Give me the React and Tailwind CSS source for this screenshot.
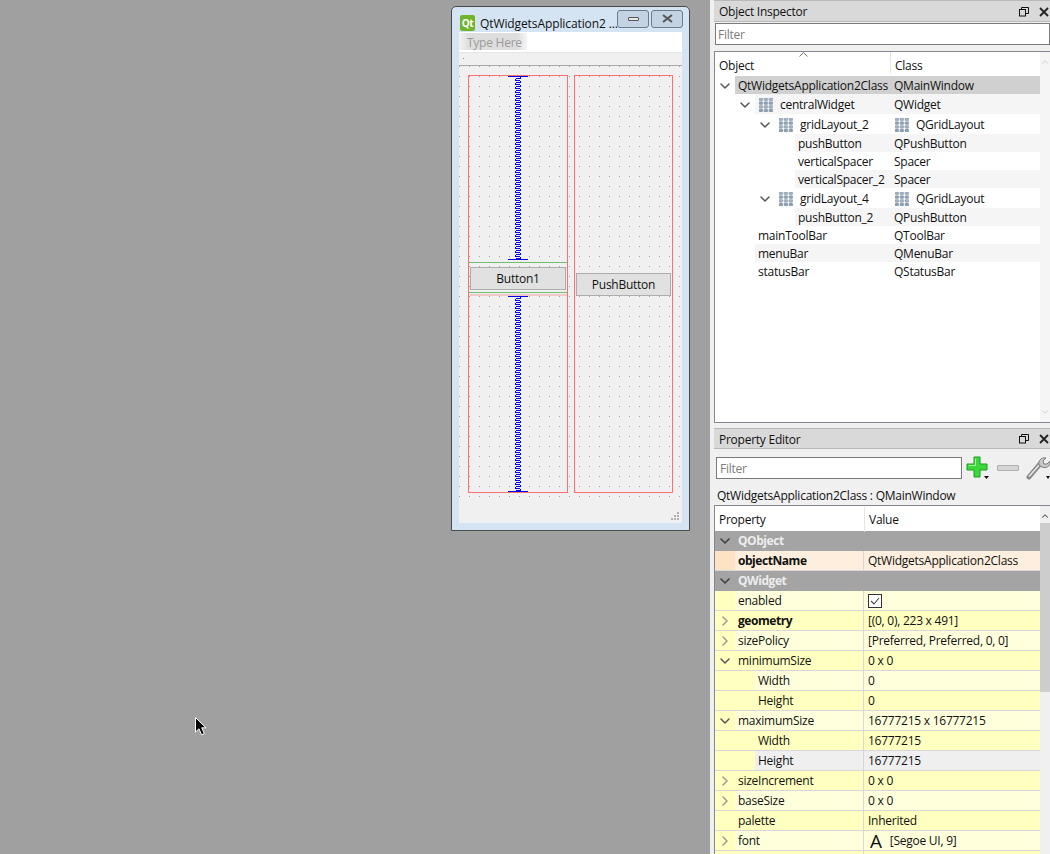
import { ChevronDown, ChevronRight, ChevronUp } from 'lucide-react';

const treeRows = [
  { name: 'QtWidgetsApplication2Class', cls: 'QMainWindow', level: 0, open: true, h: 'h-[18px]', bg: 'bg-[#d0d0d0]' },
  { name: 'centralWidget', cls: 'QWidget', level: 1, open: true, icon: true, h: 'h-5', bg: 'bg-[#f5f5f5]' },
  { name: 'gridLayout_2', cls: 'QGridLayout', level: 2, open: true, icon: true, clsIcon: true, h: 'h-5', bg: 'bg-white' },
  { name: 'pushButton', cls: 'QPushButton', level: 3, h: 'h-[18px]', bg: 'bg-[#f5f5f5]' },
  { name: 'verticalSpacer', cls: 'Spacer', level: 3, h: 'h-[18px]', bg: 'bg-white' },
  { name: 'verticalSpacer_2', cls: 'Spacer', level: 3, h: 'h-[18px]', bg: 'bg-[#f5f5f5]' },
  { name: 'gridLayout_4', cls: 'QGridLayout', level: 2, open: true, icon: true, clsIcon: true, h: 'h-5', bg: 'bg-white' },
  { name: 'pushButton_2', cls: 'QPushButton', level: 3, h: 'h-[18px]', bg: 'bg-[#f5f5f5]' },
  { name: 'mainToolBar', cls: 'QToolBar', level: 1, h: 'h-[18px]', bg: 'bg-white' },
  { name: 'menuBar', cls: 'QMenuBar', level: 1, h: 'h-[18px]', bg: 'bg-[#f5f5f5]' },
  { name: 'statusBar', cls: 'QStatusBar', level: 1, h: 'h-[18px]', bg: 'bg-white' },
];

const propRows = [
  { section: 'QObject' },
  { name: 'objectName', value: 'QtWidgetsApplication2Class', bold: true, tone: 'name' },
  { section: 'QWidget' },
  { name: 'enabled', check: true, tone: 'light' },
  { name: 'geometry', value: '[(0, 0), 223 x 491]', bold: true, arrow: 'right', tone: 'dark' },
  { name: 'sizePolicy', value: '[Preferred, Preferred, 0, 0]', arrow: 'right', tone: 'light' },
  { name: 'minimumSize', value: '0 x 0', arrow: 'down', tone: 'dark' },
  { name: 'Width', value: '0', sub: true, tone: 'light' },
  { name: 'Height', value: '0', sub: true, tone: 'dark' },
  { name: 'maximumSize', value: '16777215 x 16777215', arrow: 'down', tone: 'light' },
  { name: 'Width', value: '16777215', sub: true, tone: 'dark' },
  { name: 'Height', value: '16777215', sub: true, tone: 'selected' },
  { name: 'sizeIncrement', value: '0 x 0', arrow: 'right', tone: 'dark' },
  { name: 'baseSize', value: '0 x 0', arrow: 'right', tone: 'light' },
  { name: 'palette', value: 'Inherited', tone: 'dark' },
  { name: 'font', value: '[Segoe UI, 9]', fontIcon: true, arrow: 'right', tone: 'light' },
  { name: '', value: '', tone: 'dark' },
];

const toneBg = {
  name: 'bg-[#feeedd]',
  light: 'bg-[#ffffdc]',
  dark: 'bg-[#ffffbf]',
  selected: 'bg-[#efefef]',
};

function GridIcon({ className = '' }) {
  const cells = [];
  for (let y = 0; y < 4; y++) {
    for (let x = 0; x < 3; x++) {
      cells.push(<rect key={`${x}-${y}`} x={x * 5} y={y * 3.7} width="3.8" height="2.8" rx="1" fill={y % 2 ? '#8fa3b8' : '#a3b3c4'} stroke="#77889a" strokeWidth="0.4" />);
    }
  }
  return <svg width="14" height="14" viewBox="0 0 14 14" className={`shrink-0 ${className}`}>{cells}</svg>;
}

function TitleBar({ title, h }) {
  return (
    <div className={`flex ${h} items-center border-y border-[#b9b9b9] bg-[#d9d9d9] pl-[5px] pt-px`}>
      <span className="flex-1 pt-px">{title}</span>
      <svg width="10" height="10" viewBox="0 0 10 10" className="mr-[10px]" fill="none" stroke="#111" strokeWidth="1">
        <rect x="0.5" y="2.5" width="6" height="6.5" />
        <path d="M2.5 2.5V.5h7v6H7" />
      </svg>
      <svg width="10" height="10" viewBox="0 0 10 10" className="mr-[1px]" fill="none" stroke="#222" strokeWidth="1.8">
        <path d="M1 1l8 8M9 1l-8 8" />
      </svg>
    </div>
  );
}

function TreeRow({ row }) {
  return (
    <div className={`flex ${row.h} items-center`}>
      <div className="flex justify-end pt-px" style={{ width: (row.level + 1) * 20 }}>
        <div className="flex w-5 justify-center">
          {row.open && <ChevronDown size={16} strokeWidth={2.2} className="text-[#555]" />}
        </div>
      </div>
      <div className={`flex h-full flex-1 items-center pt-px ${row.bg}`}>
        <div className={`flex h-full items-center ${row.icon ? 'pl-1' : 'pl-[3px]'}`} style={{ width: 175 - (row.level + 1) * 20 }}>
          {row.icon && <GridIcon className="mr-[7px]" />}
          <span className="whitespace-nowrap">{row.name}</span>
        </div>
        <div className="flex items-center pl-[4px]">
          {row.clsIcon && <GridIcon className="ml-[1px] mr-[7px]" />}
          <span>{row.cls}</span>
        </div>
      </div>
    </div>
  );
}

function PropRow({ row }) {
  if (row.section) {
    return (
      <div className="flex h-5 items-center bg-[#a4a4a4]">
        <div className="flex w-5 justify-center"><ChevronDown size={16} strokeWidth={2.4} className="text-[#404040]" /></div>
        <span className="pl-[3px] font-bold tracking-[-0.45px] text-[#ededed]">{row.section}</span>
      </div>
    );
  }
  const leftBg = row.tone === 'name' ? 'bg-[#fde3c4]' : 'bg-[#ffffbf]';
  return (
    <div className="flex h-5 border-b border-[#d8d8d8]">
      <div className={`flex shrink-0 items-center justify-center pt-px ${row.sub ? 'w-10' : 'w-5'} ${leftBg}`}>
        {row.arrow === 'right' && <ChevronRight size={16} strokeWidth={2.2} className="text-[#9a9a9a]" />}
        {row.arrow === 'down' && <ChevronDown size={16} strokeWidth={2.2} className="text-[#555]" />}
      </div>
      <div className={`flex flex-1 items-center ${toneBg[row.tone]}`}>
        <div className={`flex h-full items-center border-r border-[#d8d8d8] pl-[3px] pt-px ${row.sub ? 'w-[109px]' : 'w-[129px]'} ${row.bold ? 'font-bold tracking-[-0.45px]' : ''}`}>
          {row.name}
        </div>
        <div className="flex items-center pl-[4px] pt-px">
          {row.check && (
            <svg width="14" height="14" viewBox="0 0 14 14" fill="none">
              <rect x="0.5" y="0.5" width="13" height="13" fill="#fff" stroke="#333" />
              <path d="M3 7l3 3 5-6" stroke="#444" strokeWidth="1.1" />
            </svg>
          )}
          {row.fontIcon && <span className="ml-[2px] mr-[8px] text-[19px] leading-none">A</span>}
          {row.value}
        </div>
      </div>
    </div>
  );
}

function Spacer({ h, id }) {
  return (
    <div className={`relative ${h} flex justify-center`}>
      <div className="absolute inset-x-[39px] top-0 h-px bg-[#0000e8]" />
      <div className="absolute inset-x-[39px] bottom-0 h-px bg-[#0000e8]" />
      <svg width="6" height="100%" className="block">
        <defs>
          <pattern id={id} width="6" height="4" patternUnits="userSpaceOnUse">
            <rect x="0" y="0" width="5" height="1" fill="#0000f0" />
            <rect x="5" y="1" width="1" height="1" fill="#0000f0" />
            <rect x="1" y="2" width="5" height="1" fill="#0000f0" />
            <rect x="0" y="3" width="1" height="1" fill="#0000f0" />
          </pattern>
        </defs>
        <rect width="6" height="100%" fill={`url(#${id})`} />
      </svg>
    </div>
  );
}

function FormWindow() {
  return (
    <div className="absolute left-[451px] top-[6px] flex h-[525px] w-[239px] flex-col rounded-t-[5px] border border-[#4a4a4a] bg-[#d5e4f3] px-[7px] pb-[7px]">
      <div className="flex h-[25px] shrink-0 items-center">
        <div className="ml-px mt-[7px] flex h-4 w-[15px] shrink-0 items-center justify-center rounded-[2px] bg-[#6fb52c] text-[10px] font-bold leading-none tracking-[-0.5px] text-white">Qt</div>
        <span className="ml-[5px] mt-[9px] min-w-0 flex-1 whitespace-nowrap tracking-[-0.1px] text-[#111]">QtWidgetsApplication2 ...</span>
        <div className="mb-[2px] flex h-[18px] w-8 shrink-0 items-center justify-center rounded-[3px] border border-[#6d7c8c] bg-[#c3d3e3]">
          <div className="h-1 w-[11px] rounded-[1px] border border-[#555] bg-[#e8e8e8]" />
        </div>
        <div className="mb-[2px] ml-[2px] mr-[-1px] flex h-[18px] w-8 shrink-0 items-center justify-center rounded-[3px] border border-[#6d7c8c] bg-[#c3d3e3]">
          <svg width="11" height="9" viewBox="0 0 11 9" fill="none" stroke="#555" strokeWidth="2">
            <path d="M1 1l9 7M10 1l-9 7" />
          </svg>
        </div>
      </div>
      <div className="flex flex-1 flex-col bg-[#f0f0f0]">
        <div className="h-[21px] shrink-0 border-b border-[#e6e6e6] bg-white pt-px">
          <div className="flex h-[17px] w-[68px] items-center bg-[linear-gradient(90deg,#f3f3f3,#dedede_15%,#dedede_85%,#f5f5f5)] pl-2 pt-[2px] text-[#9b9b9b]">Type Here</div>
        </div>
        <div className="relative h-[13px] shrink-0 border-b border-[#a8a8a8]">
          <div className="absolute left-[4px] top-[5px] h-px w-px bg-[#888]" />
        </div>
        <div className="flex h-[436px] shrink-0 gap-[6px] bg-[conic-gradient(at_1px_1px,transparent_75%,#a0a0a0_0)] bg-size-[10px_10px] pl-[9px] pt-[9px]">
          <div className="h-[418px] w-[100px] border border-[#ff7070]">
            <Spacer h="h-[184px]" id="zig-top" />
            <div className="mt-[2px] h-px bg-[#6fbf6f]" />
            <div className="ml-px mt-[4px] flex h-[23px] w-[96px] items-center justify-center border border-[#adadad] bg-[#e1e1e1] pt-px">Button1</div>
            <div className="mt-[2px] h-px bg-[#6fbf6f]" />
            <div className="ml-px mt-px h-[2px] w-[97px] bg-[#f4c8c8]" />
            <Spacer h="h-[196px]" id="zig-bottom" />
          </div>
          <div className="flex h-[418px] w-[99px] items-center justify-center border border-[#ff7070] pt-px">
            <div className="flex h-[23px] w-[95px] items-center justify-center border border-[#adadad] bg-[#e1e1e1] pt-px">PushButton</div>
          </div>
        </div>
        <div className="flex flex-1 items-end justify-end p-[2px]">
          <svg width="9" height="9" viewBox="0 0 9 9" fill="#b0b0b0">
            <rect x="6" y="0" width="2" height="2" />
            <rect x="3" y="3" width="2" height="2" />
            <rect x="6" y="3" width="2" height="2" />
            <rect x="0" y="6" width="2" height="2" />
            <rect x="3" y="6" width="2" height="2" />
            <rect x="6" y="6" width="2" height="2" />
          </svg>
        </div>
      </div>
    </div>
  );
}

function ObjectInspector() {
  return (
    <div className="flex h-[423px] shrink-0 flex-col">
      <TitleBar title="Object Inspector" h="h-[22px]" />
      <div className="ml-px mt-px flex h-[22px] shrink-0 items-center border border-[#7a7a7a] bg-white pl-[2px] pt-px text-[#7c7c7c]">Filter</div>
      <div className="mt-[6px] flex flex-1 border border-r-0 border-[#828790] bg-white">
        <div className="flex-1">
          <div className="relative flex h-6 items-end pb-[3px]">
            <div className="h-full w-[175px] pl-1 pt-[5px] leading-[18px]">Object</div>
            <div className="h-full border-l border-[#e5e5e5] pl-1 pt-[5px] leading-[18px]">Class</div>
            <svg width="9" height="5" viewBox="0 0 9 5" fill="none" stroke="#777" className="absolute left-[84px] top-0">
              <path d="M0.5 4.5l4-4 4 4" />
            </svg>
          </div>
          {treeRows.map((row) => <TreeRow key={row.name} row={row} />)}
        </div>
        <div className="flex w-[10px] shrink-0 flex-col items-center justify-between bg-[#f5f5f5] py-[5px]">
          <ChevronUp size={10} strokeWidth={2} className="text-[#c4c4c4]" />
          <ChevronDown size={10} strokeWidth={2} className="text-[#c4c4c4]" />
        </div>
      </div>
    </div>
  );
}

function PlusIcon() {
  return (
    <svg width="24" height="24" viewBox="0 0 24 24">
      <path d="M8 1h6v7h7v6h-7v7H8v-7H1V8h7z" fill="#3ed83e" stroke="#1b9e1b" />
      <path d="M9.500 2.500v7h-7" fill="none" stroke="#a5f5a5" />
      <path d="M18 20h5l-2.500 3z" fill="#111" />
    </svg>
  );
}

function PropertyEditor() {
  return (
    <div className="mt-[5px] flex min-h-0 flex-1 flex-col">
      <TitleBar title="Property Editor" h="h-[21px]" />
      <div className="ml-[2px] mt-[8px] flex h-[22px] shrink-0 items-center">
        <div className="flex h-full w-[246px] items-center border border-[#7a7a7a] bg-white pl-[3px] pt-px text-[#7c7c7c]">Filter</div>
        <div className="ml-[4px]"><PlusIcon /></div>
        <div className="ml-[7px] h-[6px] w-[22px] rounded-[1px] border border-[#b0b0b0] bg-[#d6d6d6]" />
        <svg width="24" height="24" viewBox="0 0 24 24" className="ml-[7px] shrink-0">
          <path d="M3 21L14 8" stroke="#8a8a8a" strokeWidth="5" strokeLinecap="round" />
          <path d="M3 20.500L14 8" stroke="#e8e8e8" strokeWidth="1.500" />
          <path d="M13 9c-1-4 2-8 7-7l-3 3 1 3 3 0 3-3c1 5-4 8-8 6z" fill="#c8c8c8" stroke="#7a7a7a" />
          <path d="M20 20h4l-2 3z" fill="#111" />
        </svg>
      </div>
      <div className="flex h-[26px] shrink-0 items-center pl-[3px] pt-[7px]">QtWidgetsApplication2Class : QMainWindow</div>
      <div className="flex min-h-0 flex-1 border-l border-t border-[#828790] bg-white">
        <div className="min-w-0 flex-1">
          <div className="flex h-[25px] items-center pt-px">
            <div className="w-[150px] border-r border-[#e5e5e5] pl-1 leading-[25px]">Property</div>
            <div className="pl-1 leading-[25px]">Value</div>
          </div>
          {propRows.map((row, i) => <PropRow key={i} row={row} />)}
        </div>
        <div className="flex w-[10px] shrink-0 flex-col items-center bg-[#f0f0f0]">
          <ChevronUp size={10} strokeWidth={2.500} className="mt-[5px] shrink-0 text-[#555]" />
          <div className="mt-[2px] h-[169px] w-full shrink-0 bg-[#cdcdcd]" />
        </div>
      </div>
    </div>
  );
}

export default function App() {
  return (
    <div className="flex h-[854px] w-[1050px] overflow-hidden font-['Open_Sans','Noto_Sans',sans-serif] text-[12px] leading-none tracking-[-0.25px] text-[#111]">
      <div className="relative w-[710px] shrink-0 bg-[#a0a0a0]">
        <FormWindow />
        <svg width="13" height="20" viewBox="0 0 13 20" className="absolute left-[195px] top-[717px]">
          <path d="M.5.500V15l3.500-3.200 2.600 6 2.700-1.200-2.600-5.800H11z" fill="#000" stroke="#fff" />
        </svg>
      </div>
      <div className="flex min-w-0 flex-1 flex-col bg-[#f0f0f0] pl-[4px]">
        <ObjectInspector />
        <PropertyEditor />
      </div>
    </div>
  );
}
